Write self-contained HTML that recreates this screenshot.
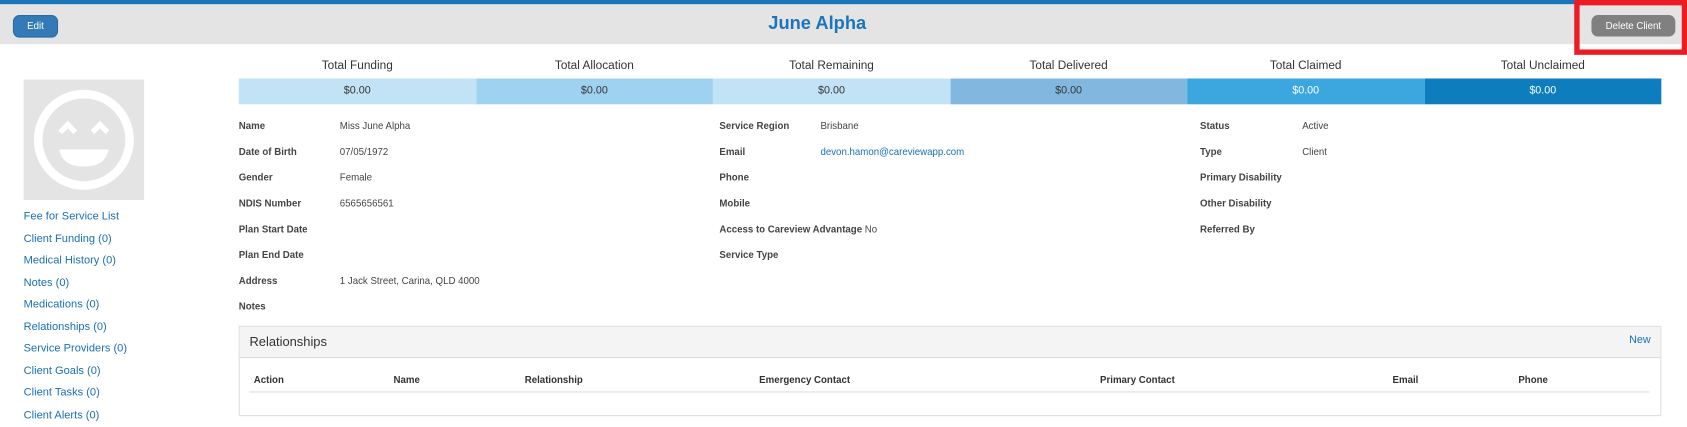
<!DOCTYPE html>
<html><head><style>
*{margin:0;padding:0;box-sizing:border-box}
body{width:1687px;height:426px;background:#fff;font-family:"Liberation Sans",sans-serif;position:relative;overflow:hidden;color:#333}
#w{position:absolute;left:0;top:0;width:1569px;height:397px;transform:scale(1.0753);transform-origin:0 0}
.a{position:absolute;white-space:nowrap}
.lb{font-size:9px;font-weight:bold;color:#444}
.v{font-size:9px;color:#444}
.lk{font-size:10.3px;color:#1a6fb5}
.th{font-size:11px;color:#333;text-align:center;width:220.5px}
.cell{position:absolute;top:73px;height:24px;width:220.5px;font-size:10px;text-align:center;line-height:24px}
.rh{font-size:9px;font-weight:bold;color:#333}
</style></head><body><div id="w">
<div class="a" style="left:0;top:0;width:1569px;height:4px;background:#1a75bb"></div>
<div class="a" style="left:0;top:4px;width:1569px;height:37px;background:#e4e4e4"></div>
<div class="a" style="left:12px;top:14px;width:42px;height:21px;background:#337ab7;border:1px solid #2a6aa3;border-radius:6px;color:#fff;font-size:9px;text-align:center;line-height:19px">Edit</div>
<div class="a" style="left:0;width:1520px;top:12px;text-align:center;font-size:17px;font-weight:bold;color:#1a75bb">June Alpha</div>
<div class="a" style="left:1464px;top:0;width:105px;height:51px;border:5px solid #ed1c24"></div>
<div class="a" style="left:1480px;top:14px;width:78px;height:20px;background:#808080;border-radius:6px;color:#fff;font-size:9px;text-align:center;line-height:20px">Delete Client</div>

<div class="a th" style="left:222px;top:55px">Total Funding</div>
<div class="a th" style="left:442.5px;top:55px">Total Allocation</div>
<div class="a th" style="left:663px;top:55px">Total Remaining</div>
<div class="a th" style="left:883.5px;top:55px">Total Delivered</div>
<div class="a th" style="left:1104px;top:55px">Total Claimed</div>
<div class="a th" style="left:1324.5px;top:55px">Total Unclaimed</div>
<div class="cell" style="left:222px;background:#c2e3f5">$0.00</div>
<div class="cell" style="left:442.5px;background:#9fd2f1">$0.00</div>
<div class="cell" style="left:663px;background:#c2e3f5">$0.00</div>
<div class="cell" style="left:883.5px;background:#82b8e0">$0.00</div>
<div class="cell" style="left:1104px;background:#3ca7df;color:#fff">$0.00</div>
<div class="cell" style="left:1324.5px;background:#0d7dbd;color:#fff">$0.00</div>

<div class="a" style="left:22px;top:74px;width:112px;height:112px;background:#e4e4e4">
<svg width="112" height="112" viewBox="0 0 112 112"><circle cx="56" cy="56" r="42.5" fill="none" stroke="#fff" stroke-width="8"/><path d="M34 49 L41 42 L48 49" fill="none" stroke="#fff" stroke-width="5"/><path d="M64 49 L71 42 L78 49" fill="none" stroke="#fff" stroke-width="5"/><path d="M33 65 H79 Q76 81 56 81 Q36 81 33 65Z" fill="#fff"/></svg></div>

<div class="a lk" style="left:22px;top:196px">Fee for Service List</div>
<div class="a lk" style="left:22px;top:216.5px">Client Funding (0)</div>
<div class="a lk" style="left:22px;top:237px">Medical History (0)</div>
<div class="a lk" style="left:22px;top:257.5px">Notes (0)</div>
<div class="a lk" style="left:22px;top:278px">Medications (0)</div>
<div class="a lk" style="left:22px;top:298.5px">Relationships (0)</div>
<div class="a lk" style="left:22px;top:319px">Service Providers (0)</div>
<div class="a lk" style="left:22px;top:339.5px">Client Goals (0)</div>
<div class="a lk" style="left:22px;top:360px">Client Tasks (0)</div>
<div class="a lk" style="left:22px;top:380.5px">Client Alerts (0)</div>

<div class="a lb" style="left:222px;top:112px">Name</div><div class="a v" style="left:316px;top:112px">Miss June Alpha</div>
<div class="a lb" style="left:222px;top:136px">Date of Birth</div><div class="a v" style="left:316px;top:136px">07/05/1972</div>
<div class="a lb" style="left:222px;top:160px">Gender</div><div class="a v" style="left:316px;top:160px">Female</div>
<div class="a lb" style="left:222px;top:184px">NDIS Number</div><div class="a v" style="left:316px;top:184px">6565656561</div>
<div class="a lb" style="left:222px;top:208px">Plan Start Date</div>
<div class="a lb" style="left:222px;top:232px">Plan End Date</div>
<div class="a lb" style="left:222px;top:256px">Address</div><div class="a v" style="left:316px;top:256px">1 Jack Street, Carina, QLD 4000</div>
<div class="a lb" style="left:222px;top:280px">Notes</div>

<div class="a lb" style="left:669px;top:112px">Service Region</div><div class="a v" style="left:763px;top:112px">Brisbane</div>
<div class="a lb" style="left:669px;top:136px">Email</div><div class="a v" style="left:763px;top:136px;color:#1a6fb5">devon.hamon@careviewapp.com</div>
<div class="a lb" style="left:669px;top:160px">Phone</div>
<div class="a lb" style="left:669px;top:184px">Mobile</div>
<div class="a lb" style="left:669px;top:208px">Access to Careview Advantage <span style="font-weight:normal">No</span></div>
<div class="a lb" style="left:669px;top:232px">Service Type</div>

<div class="a lb" style="left:1116px;top:112px">Status</div><div class="a v" style="left:1211px;top:112px">Active</div>
<div class="a lb" style="left:1116px;top:136px">Type</div><div class="a v" style="left:1211px;top:136px">Client</div>
<div class="a lb" style="left:1116px;top:160px">Primary Disability</div>
<div class="a lb" style="left:1116px;top:184px">Other Disability</div>
<div class="a lb" style="left:1116px;top:208px">Referred By</div>

<div class="a" style="left:222px;top:303px;width:1323px;height:84px;border:1px solid #ddd"></div>
<div class="a" style="left:223px;top:304px;width:1321px;height:29px;background:#f4f4f4;border-bottom:1px solid #ddd"></div>
<div class="a" style="left:232px;top:311px;font-size:12px;color:#333">Relationships</div>
<div class="a" style="left:1515px;top:311px;font-size:10px;color:#1a6fb5">New</div>
<div class="a rh" style="left:236px;top:348px">Action</div>
<div class="a rh" style="left:366px;top:348px">Name</div>
<div class="a rh" style="left:488px;top:348px">Relationship</div>
<div class="a rh" style="left:706px;top:348px">Emergency Contact</div>
<div class="a rh" style="left:1023px;top:348px">Primary Contact</div>
<div class="a rh" style="left:1295px;top:348px">Email</div>
<div class="a rh" style="left:1412px;top:348px">Phone</div>
<div class="a" style="left:232px;top:364px;width:1302px;height:1px;background:#ddd"></div>
</div></body></html>
